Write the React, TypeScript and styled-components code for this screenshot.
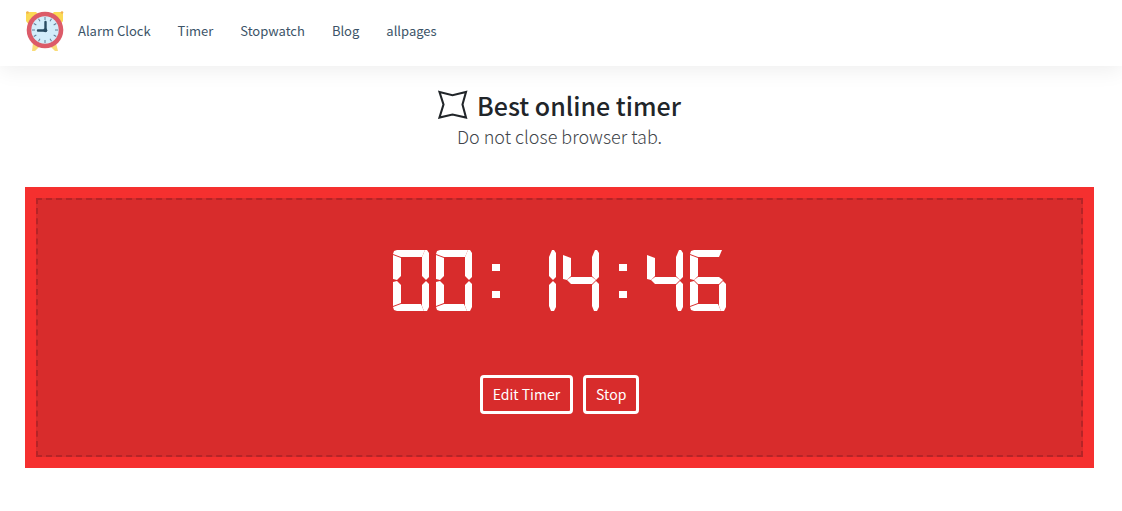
import React from "react";
import styled, { createGlobalStyle } from "styled-components";

const GlobalStyle = createGlobalStyle`
  * { box-sizing: border-box; }
  body {
    margin: 0;
    background: #fff;
    color: #212529;
    font-family: "Noto Sans CJK SC", "Noto Sans", sans-serif;
  }
`;

const Header = styled.header`
  display: flex;
  align-items: center;
  gap: 14px;
  height: 66px;
  padding: 0 24px 4px;
  background: #fff;
  box-shadow: 0 4px 20px rgba(0, 0, 0, 0.07);
`;

const LogoLink = styled.a`
  display: flex;
  width: 40px;
  height: 42px;
`;

const Nav = styled.nav`
  display: flex;
  gap: 27px;
`;

const NavLink = styled.a`
  color: #3c5468;
  font-size: 13px;
  line-height: 20px;
  text-decoration: none;
  white-space: nowrap;
`;

const Main = styled.main`
  padding: 22px 28px 40px 25px;
`;

const Heading = styled.div`
  text-align: center;
`;

const Title = styled.h1`
  display: flex;
  align-items: center;
  justify-content: center;
  gap: 9px;
  margin: 0;
  font-size: 25px;
  font-weight: 500;
  line-height: 34px;
`;

const Subtitle = styled.p`
  margin: 0;
  color: #41454a;
  font-size: 18px;
  font-weight: 300;
  line-height: 28px;
`;

const Panel = styled.section`
  margin-top: 37px;
  padding: 11px;
  background: #f5302f;
`;

const PanelInner = styled.div`
  display: flex;
  flex-direction: column;
  align-items: center;
  gap: 64px;
  padding: 50px 16px 41px;
  border: 2px dashed #b52427;
  background: #d82c2c;
`;

const Display = styled.div`
  display: flex;
  align-items: center;
  gap: 20px;
`;

const Pair = styled.div`
  display: flex;
  gap: 7px;
`;

const Cell = styled.div`
  position: relative;
  width: 36px;
  height: 61px;
`;

const Segment = styled.span<{ $shape: string }>`
  position: absolute;
  inset: 0;
  background: #fff;
  clip-path: polygon(${(p) => p.$shape});
`;

const Colon = styled.div`
  display: flex;
  flex-direction: column;
  gap: 20px;
`;

const Dot = styled.span`
  width: 8px;
  height: 7px;
  background: #fff;
`;

const Actions = styled.div`
  display: flex;
  gap: 10px;
`;

const Button = styled.button`
  height: 39px;
  padding: 0 10px 1px;
  border: 3px solid #fff;
  border-radius: 4px;
  background: transparent;
  color: #fff;
  font-family: inherit;
  font-size: 14px;
  line-height: 24px;
  cursor: pointer;
`;

type SegmentName = "a" | "b" | "c" | "d" | "e" | "f" | "g";

const segmentShapes: Record<SegmentName, string> = {
  a: "0 4px, 1px 1px, 4px 0, 32px 0, 29px 7px, 8px 7px",
  b: "29px 7px, 32px 0, 34px 0, 36px 3px, 36px 27px, 33px 30px, 29px 26px",
  c: "33px 31px, 36px 34px, 36px 57px, 34px 61px, 31px 61px, 29px 56px, 29px 35px",
  d: "0 57px, 8px 54px, 28px 54px, 31px 61px, 4px 61px, 1px 60px",
  e: "4px 31px, 8px 35px, 8px 53px, 0 56px, 0 32px",
  f: "0 5px, 8px 8px, 8px 26px, 4px 30px, 0 29px",
  g: "4px 30px, 8px 27px, 29px 27px, 33px 30px, 29px 34px, 8px 34px",
};

const litSegments: Record<string, string> = {
  "0": "abcdef",
  "1": "bc",
  "2": "abdeg",
  "3": "abcdg",
  "4": "bcfg",
  "5": "acdfg",
  "6": "acdefg",
  "7": "abc",
  "8": "abcdefg",
  "9": "abcdfg",
};

function Digits({ value }: { value: string }) {
  return (
    <Pair>
      {value.split("").map((digit, i) => (
        <Cell key={i}>
          {litSegments[digit].split("").map((name) => (
            <Segment key={name} $shape={segmentShapes[name as SegmentName]} />
          ))}
        </Cell>
      ))}
    </Pair>
  );
}

function Separator() {
  return (
    <Colon>
      <Dot />
      <Dot />
    </Colon>
  );
}

function ClockLogo() {
  const ticks = Array.from({ length: 12 }, (_, i) => i * 30);
  return (
    <svg width="40" height="42" viewBox="0 0 40 42" aria-hidden="true">
      <path d="M9 33 L8 41 H11 L16 36Z M32 33 L34 41 H31 L26 36Z" fill="#f9dc78" />
      <path d="M2 2 H12 L15 5 L5 15 L2 11Z M39 2 H30 L27 5 L36 15 L39 11Z" fill="#fbd955" />
      <circle cx="3.5" cy="2.5" r="1.3" fill="#f1b24f" />
      <circle cx="38" cy="2.5" r="1.3" fill="#f1b24f" />
      <circle cx="21" cy="20" r="18.3" fill="#dc5b69" />
      <circle cx="21" cy="20" r="13.7" fill="#d3edfb" />
      {ticks.map((angle) => (
        <path
          key={angle}
          d="M21 7 V10"
          stroke="#617e98"
          strokeWidth="1"
          transform={`rotate(${angle} 21 20)`}
        />
      ))}
      <path d="M21.5 12 V20.5 H14" fill="none" stroke="#294c63" strokeWidth="2.4" strokeLinecap="round" />
      <circle cx="21.3" cy="20.3" r="2" fill="#294c63" />
    </svg>
  );
}

function StarIcon() {
  return (
    <svg width="30" height="30" viewBox="0 0 30 30" aria-hidden="true">
      <path
        d="M1.5 2 L14.5 5.2 L28 2 L24.5 14.5 L28 27.5 L14.5 24.5 L1.5 27.5 L5.5 14.5Z"
        fill="none"
        stroke="#212529"
        strokeWidth="2.1"
      />
    </svg>
  );
}

const navItems = ["Alarm Clock", "Timer", "Stopwatch", "Blog", "allpages"];

export default function App() {
  return (
    <>
      <GlobalStyle />
      <Header>
        <LogoLink href="#" aria-label="Home">
          <ClockLogo />
        </LogoLink>
        <Nav>
          {navItems.map((item) => (
            <NavLink key={item} href="#">
              {item}
            </NavLink>
          ))}
        </Nav>
      </Header>
      <Main>
        <Heading>
          <Title>
            <StarIcon />
            Best online timer
          </Title>
          <Subtitle>Do not close browser tab.</Subtitle>
        </Heading>
        <Panel>
          <PanelInner>
            <Display role="timer" aria-label="00:14:46">
              <Digits value="00" />
              <Separator />
              <Digits value="14" />
              <Separator />
              <Digits value="46" />
            </Display>
            <Actions>
              <Button type="button">Edit Timer</Button>
              <Button type="button">Stop</Button>
            </Actions>
          </PanelInner>
        </Panel>
      </Main>
    </>
  );
}
